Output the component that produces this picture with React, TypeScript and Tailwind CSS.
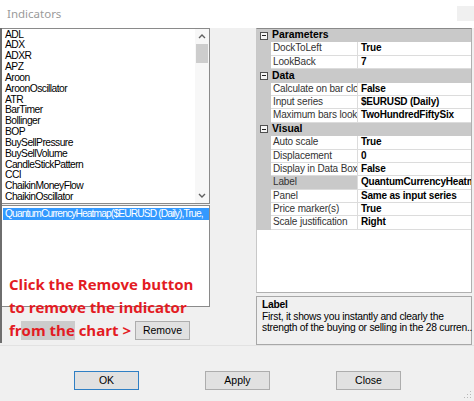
import React from "react";

const listItems = [
  "ADL", "ADX", "ADXR", "APZ", "Aroon", "AroonOscillator", "ATR", "BarTimer", "Bollinger", "BOP",
  "BuySellPressure", "BuySellVolume", "CandleStickPattern", "CCI", "ChaikinMoneyFlow", "ChaikinOscillator",
];

type Row = { cat?: string; name?: string; value?: string; sel?: boolean };
const rows: Row[] = [
  { cat: "Parameters" },
  { name: "DockToLeft", value: "True" },
  { name: "LookBack", value: "7" },
  { cat: "Data" },
  { name: "Calculate on bar close", value: "False" },
  { name: "Input series", value: "$EURUSD (Daily)" },
  { name: "Maximum bars look back", value: "TwoHundredFiftySix" },
  { cat: "Visual" },
  { name: "Auto scale", value: "True" },
  { name: "Displacement", value: "0" },
  { name: "Display in Data Box", value: "False" },
  { name: "Label", value: "QuantumCurrencyHeatmap", sel: true },
  { name: "Panel", value: "Same as input series" },
  { name: "Price marker(s)", value: "True" },
  { name: "Scale justification", value: "Right" },
];

const sans = { fontFamily: '"Liberation Sans", Arial, sans-serif' };

function Chevron({ up }: { up?: boolean }) {
  return (
    <svg width="8" height="5" viewBox="0 0 8 5">
      <path d={up ? "M1 4 L4 1 L7 4" : "M1 1 L4 4 L7 1"} fill="none" stroke="#606060" strokeWidth="1.4" />
    </svg>
  );
}

function Minus() {
  return (
    <div className="w-[8px] h-[8px] border border-[#505050] bg-[#f4f4f4] flex items-center justify-center">
      <div className="w-[4px] h-[1px] bg-[#202020]" />
    </div>
  );
}

export default function App() {
  return (
    <div className="relative w-[474px] h-[401px] bg-[#f0f0f0] overflow-hidden flex flex-col" style={sans}>
      {/* title bar */}
      <div className="h-[28px] bg-white flex items-center justify-between shrink-0">
        <span className="pl-[7px] text-[11.5px] text-[#9a9a9a]" style={{ fontFamily: '"Noto Sans", sans-serif' }}>Indicators</span>
        <div className="w-[17px] h-[15px] bg-[#f0f0f0] mb-[2px]" />
      </div>

      {/* body */}
      <div className="flex h-[317px] shrink-0">
        {/* left column */}
        <div className="w-[210px] flex flex-col border-l-[2px] border-[#6e6e6e] h-[315px]">
          <div className="h-[176px] bg-white border-t border-r border-b border-[#8a8a8a] flex">
            <div className="flex-1 pl-[3px] pt-[0.5px] text-[10.3px] tracking-[-0.55px] text-black">
              {listItems.map((it) => (
                <div key={it} className="h-[10.85px] leading-[10.85px] whitespace-nowrap">{it}</div>
              ))}
            </div>
            <div className="w-[14px] flex flex-col bg-[#f7f7f7]">
              <div className="h-[15px] flex items-center justify-center"><Chevron up /></div>
              <div className="flex-1">
                <div className="h-[19px] mx-[1px] bg-[#cdcdcd]" />
              </div>
              <div className="h-[15px] flex items-center justify-center"><Chevron /></div>
            </div>
          </div>
          <div className="mt-[1px] h-[102px] bg-white border-t border-r border-b border-[#8a8a8a] pt-[2px] pl-[1px]">
            <div className="h-[12px] bg-[#3399ff] text-white text-[10.2px] tracking-[-0.85px] leading-[12px] pl-[2px] whitespace-nowrap overflow-hidden">
              QuantumCurrencyHeatmap($EURUSD (Daily),True,
            </div>
          </div>
          <div className="mt-[14px] h-[19px] flex">
            <div className="ml-[19px] w-[54px] h-[19px] bg-[#cccccc]" />
            <button className="ml-[60px] w-[55px] h-[19px] bg-[#e1e1e1] border border-[#adadad] text-[10.5px] text-black flex items-center justify-center">
              Remove
            </button>
          </div>
        </div>

        {/* right column */}
        <div className="ml-[46px] w-[216px] flex flex-col">
          <div className="h-[265px] bg-white border-t border-[#8a8a8a] border-r border-r-[#b0b0b0] border-b border-b-[#b0b0b0] border-l border-l-[#c8c8c8] overflow-hidden">
            {rows.map((r, i) =>
              r.cat ? (
                <div key={i} className="h-[13.4px] bg-[#c9c9c9] flex items-center">
                  <div className="w-[14px] flex items-center justify-center"><Minus /></div>
                  <span className="pl-[1px] text-[10.4px] font-bold text-black leading-none">{r.cat}</span>
                </div>
              ) : (
                <div key={i} className="h-[13.4px] flex">
                  <div className="w-[14px] bg-[#c9c9c9]" />
                  <div className={`w-[87px] border-b border-r border-[#dcdcdc] pl-[2px] text-[10px] tracking-[-0.15px] leading-[12.4px] text-[#333] whitespace-nowrap overflow-hidden ${r.sel ? "bg-[#c9c9c9]" : ""}`}>
                    {r.name}
                  </div>
                  <div className="flex-1 border-b border-[#dcdcdc] pl-[3px] text-[10px] leading-[12.4px] font-bold text-black whitespace-nowrap overflow-hidden tracking-[-0.2px]">
                    {r.value}
                  </div>
                </div>
              )
            )}
          </div>
          <div className="mt-[3px] h-[49px] bg-[#f0f0f0] border border-[#a8a8a8] pl-[5px] pt-[2px] text-[10.3px] leading-[11.5px] tracking-[-0.25px] text-black">
            <div className="font-bold">Label</div>
            <div className="whitespace-nowrap">First, it shows you instantly and clearly the</div>
            <div className="whitespace-nowrap">strength of the buying or selling in the 28 curren..</div>
          </div>
        </div>
      </div>

      {/* footer */}
      <div className="flex-1 border-t border-[#e2e2e2] bg-[#f0f0f0] pt-[25px] pl-[74px] flex gap-[66px]">
        <button className="w-[65px] h-[19px] bg-[#e1e1e1] border border-[#2f7fc4] text-[10.5px] text-black flex items-center justify-center">OK</button>
        <button className="w-[65px] h-[19px] bg-[#e1e1e1] border border-[#adadad] text-[10.5px] text-black flex items-center justify-center">Apply</button>
        <button className="w-[65px] h-[19px] bg-[#e1e1e1] border border-[#adadad] text-[10.5px] text-black flex items-center justify-center">Close</button>
      </div>

      {/* resize grip */}
      <svg className="absolute right-[2px] bottom-[2px]" width="8" height="8" viewBox="0 0 8 8">
        <rect x="6" y="0" width="1" height="1" fill="#b8b8b8" />
        <rect x="3" y="3" width="1" height="1" fill="#b8b8b8" />
        <rect x="6" y="3" width="1" height="1" fill="#b8b8b8" />
        <rect x="0" y="6" width="1" height="1" fill="#b8b8b8" />
        <rect x="3" y="6" width="1" height="1" fill="#b8b8b8" />
        <rect x="6" y="6" width="1" height="1" fill="#b8b8b8" />
      </svg>

      {/* red annotation */}
      <div
        className="absolute left-[9px] top-[273px] text-[15px] leading-[23px] font-bold text-[#e31b23] whitespace-nowrap"
        style={{ fontFamily: '"Open Sans", sans-serif' }}
      >
        <div>Click the Remove button</div>
        <div>to remove the indicator</div>
        <div>from the chart &gt;</div>
      </div>
    </div>
  );
}
